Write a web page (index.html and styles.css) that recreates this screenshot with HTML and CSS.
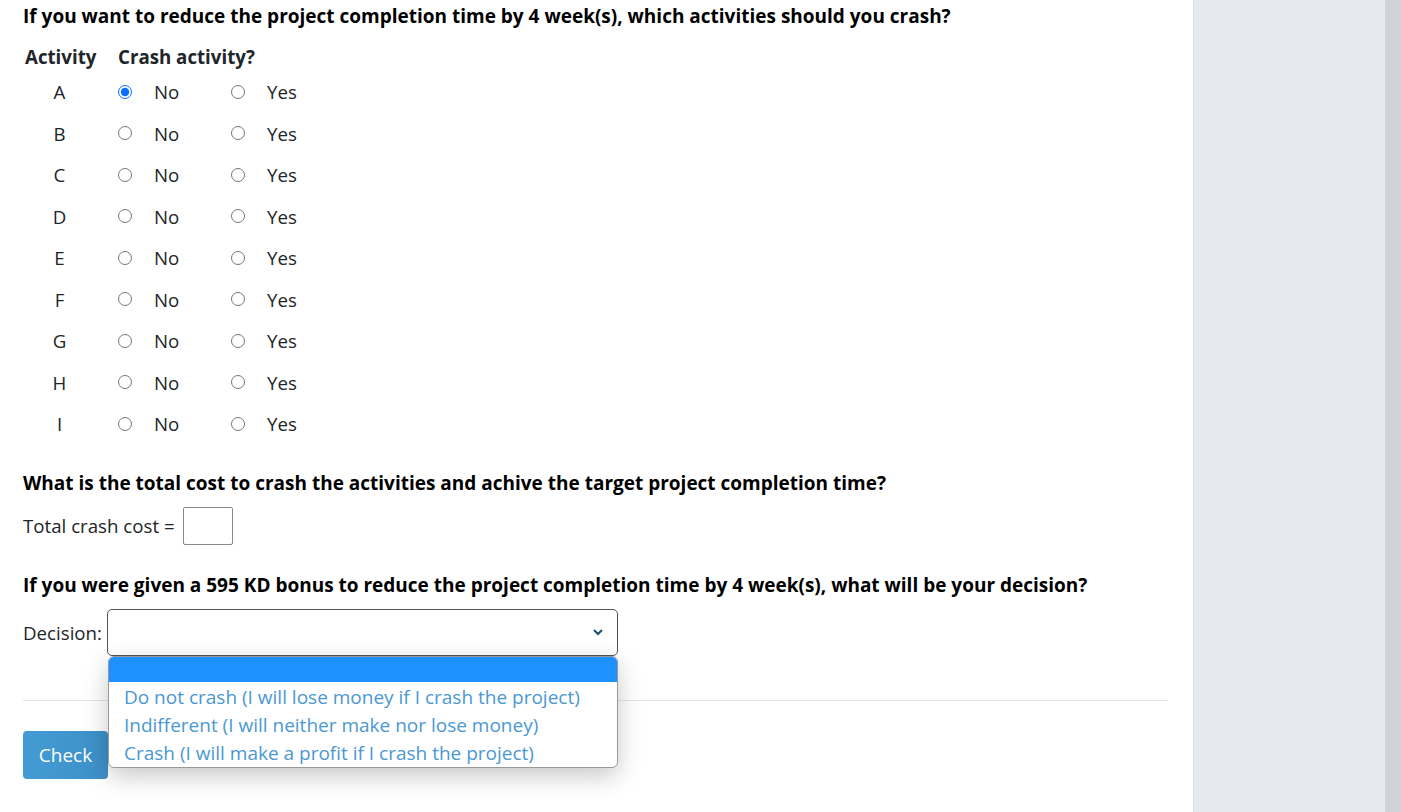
FILE: index.html
```html
<!DOCTYPE html>
<html lang="en">
<head>
<meta charset="UTF-8">
<meta name="viewport" content="width=device-width, initial-scale=1.0">
<title>Project Crashing</title>
<link rel="stylesheet" href="styles.css">
</head>
<body>

<div class="pagina">
    <main class="conteudo">
        <h3>If you want to reduce the project completion time by 4 week(s), which activities should you crash?</h3>

        <table class="atividades">
            <tr><th>Activity</th><th colspan="2">Crash activity?</th></tr>
            <tr><td class="letra">A</td><td><label><input type="radio" name="a" checked> No</label></td><td><label><input type="radio" name="a"> Yes</label></td></tr>
            <tr><td class="letra">B</td><td><label><input type="radio" name="b"> No</label></td><td><label><input type="radio" name="b"> Yes</label></td></tr>
            <tr><td class="letra">C</td><td><label><input type="radio" name="c"> No</label></td><td><label><input type="radio" name="c"> Yes</label></td></tr>
            <tr><td class="letra">D</td><td><label><input type="radio" name="d"> No</label></td><td><label><input type="radio" name="d"> Yes</label></td></tr>
            <tr><td class="letra">E</td><td><label><input type="radio" name="e"> No</label></td><td><label><input type="radio" name="e"> Yes</label></td></tr>
            <tr><td class="letra">F</td><td><label><input type="radio" name="f"> No</label></td><td><label><input type="radio" name="f"> Yes</label></td></tr>
            <tr><td class="letra">G</td><td><label><input type="radio" name="g"> No</label></td><td><label><input type="radio" name="g"> Yes</label></td></tr>
            <tr><td class="letra">H</td><td><label><input type="radio" name="h"> No</label></td><td><label><input type="radio" name="h"> Yes</label></td></tr>
            <tr><td class="letra">I</td><td><label><input type="radio" name="i"> No</label></td><td><label><input type="radio" name="i"> Yes</label></td></tr>
        </table>

        <h3>What is the total cost to crash the activities and achive the target project completion time?</h3>
        <p class="linha">Total crash cost = <input type="text" class="caixa"></p>

        <h3>If you were given a 595 KD bonus to reduce the project completion time by 4 week(s), what will be your decision?</h3>
        <div class="linha">
            Decision:
            <div class="escolha">
                <div class="campo">
                    <svg width="12" height="8" viewBox="0 0 12 8"><path d="M2 2l4 4 4-4" fill="none" stroke="#1d4d6b" stroke-width="2"/></svg>
                </div>
                <ul class="lista">
                    <li class="marcado">&nbsp;</li>
                    <li>Do not crash (I will lose money if I crash the project)</li>
                    <li>Indifferent (I will neither make nor lose money)</li>
                    <li>Crash (I will make a profit if I crash the project)</li>
                </ul>
            </div>
        </div>

        <hr>
        <button class="btn-check">Check</button>
    </main>
    <aside class="lateral"></aside>
    <div class="rolagem"></div>
</div>

</body>
</html>
```

FILE: styles.css
```css
body {
    margin: 0;
    font-family: "Open Sans", "Noto Sans", sans-serif;
    font-size: 18.7px;
    color: #212529;
    background: #fff;
}
.pagina {
    display: flex;
    height: 812px;
    overflow: hidden;
}
.conteudo {
    width: 1145px;
    padding: 0 25px 0 23px;
}
.lateral {
    width: 191px;
    background: #e6e9ed;
    border-left: 1px solid #dde1e6;
}
.rolagem {
    width: 16px;
    background: #cfd3d9;
}
h3 {
    font-size: 19px;
    line-height: 26px;
    font-weight: 700;
    color: #000;
    margin: 3px 0 0;
}
.atividades {
    border-collapse: collapse;
    margin-top: 12px;
    margin-bottom: 25px;
}
.atividades th {
    text-align: left;
    font-weight: 700;
    padding: 0;
    height: 30px;
    color: #212529;
}
.atividades th:first-child {
    padding-left: 2px;
    width: 93px;
}
.atividades td {
    height: 41.5px;
    padding: 0;
}
.letra {
    text-align: center;
    padding-right: 22px !important;
}
.atividades td label {
    display: flex;
    align-items: center;
    width: 113px;
}
.atividades input[type="radio"] {
    width: 14px;
    height: 14px;
    margin: 0 22px 0 0;
    accent-color: #0d6efd;
}
.linha {
    display: flex;
    align-items: center;
    gap: 5px;
    margin: 11px 0 27px;
}
.caixa {
    width: 48px;
    height: 36px;
    border: 1px solid #888;
    border-radius: 2px;
    padding: 0;
    margin: 0 0 0 3px;
}
.escolha {
    position: relative;
    width: 511px;
}
.campo {
    height: 45px;
    border: 1px solid #555;
    border-radius: 5px;
    display: flex;
    align-items: center;
    justify-content: flex-end;
    padding-right: 13px;
}
.lista {
    position: absolute;
    top: 47px;
    left: 1px;
    width: 508px;
    list-style: none;
    margin: 0;
    padding: 0;
    background: #fff;
    border: 1px solid #999;
    border-radius: 6px;
    box-shadow: 0 8px 24px rgba(0, 0, 0, 0.22);
    color: #4b98d3;
    z-index: 2;
    overflow: hidden;
}
.lista li {
    height: 28px;
    line-height: 28px;
    padding-left: 15px;
    font-size: 19px;
}
.lista .marcado {
    background: #1e90ff;
    height: 25px;
    margin-bottom: 1px;
}
hr {
    border: none;
    border-top: 1px solid #e5e5e5;
    margin: 44px 0 30px;
}
.btn-check {
    background: linear-gradient(90deg, #449bd4, #3d90c8);
    color: #fff;
    border: none;
    border-radius: 4px;
    font-family: inherit;
    font-size: 19px;
    padding: 0;
    height: 48px;
    width: 85px;
}
```
